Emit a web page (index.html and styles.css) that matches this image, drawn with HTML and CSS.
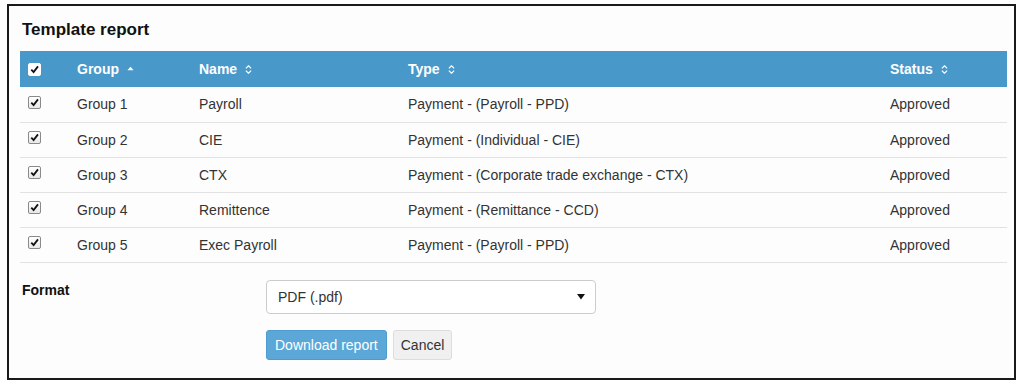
FILE: index.html
```html
<!DOCTYPE html>
<html>
   <head>
      <meta charset="UTF-8">
      <meta name="viewport" content="width=device-width, initial-scale=1.0"/>
      <title>Template report</title>
      <link rel="stylesheet" href="styles.css">
   </head>
   <body>
      <div class="frame">
         <h2 class="title">Template report</h2>

         <table class="report">
            <thead>
               <tr>
                  <th class="col-check"><span class="check check-head"><svg viewBox="0 0 12 12"><path d="M2.5 6.2 L5 8.8 L9.8 2.6" /></svg></span></th>
                  <th class="col-group">Group <svg class="sort" viewBox="0 0 8 10"><path class="up" d="M1.2 5.6 L4 2.6 L6.8 5.6 Z" /></svg></th>
                  <th class="col-name">Name <svg class="sort" viewBox="0 0 8 10"><path d="M1.6 4 L4 1.6 L6.4 4 M1.6 6 L4 8.4 L6.4 6" /></svg></th>
                  <th class="col-type">Type <svg class="sort" viewBox="0 0 8 10"><path d="M1.6 4 L4 1.6 L6.4 4 M1.6 6 L4 8.4 L6.4 6" /></svg></th>
                  <th class="col-status">Status <svg class="sort" viewBox="0 0 8 10"><path d="M1.6 4 L4 1.6 L6.4 4 M1.6 6 L4 8.4 L6.4 6" /></svg></th>
               </tr>
            </thead>
            <tbody>
               <tr>
                  <td><span class="check"><svg viewBox="0 0 12 12"><path d="M2.5 6.2 L5 8.8 L9.8 2.6" /></svg></span></td>
                  <td>Group 1</td>
                  <td>Payroll</td>
                  <td>Payment - (Payroll - PPD)</td>
                  <td>Approved</td>
               </tr>
               <tr>
                  <td><span class="check"><svg viewBox="0 0 12 12"><path d="M2.5 6.2 L5 8.8 L9.8 2.6" /></svg></span></td>
                  <td>Group 2</td>
                  <td>CIE</td>
                  <td>Payment - (Individual - CIE)</td>
                  <td>Approved</td>
               </tr>
               <tr>
                  <td><span class="check"><svg viewBox="0 0 12 12"><path d="M2.5 6.2 L5 8.8 L9.8 2.6" /></svg></span></td>
                  <td>Group 3</td>
                  <td>CTX</td>
                  <td>Payment - (Corporate trade exchange - CTX)</td>
                  <td>Approved</td>
               </tr>
               <tr>
                  <td><span class="check"><svg viewBox="0 0 12 12"><path d="M2.5 6.2 L5 8.8 L9.8 2.6" /></svg></span></td>
                  <td>Group 4</td>
                  <td>Remittence</td>
                  <td>Payment - (Remittance - CCD)</td>
                  <td>Approved</td>
               </tr>
               <tr>
                  <td><span class="check"><svg viewBox="0 0 12 12"><path d="M2.5 6.2 L5 8.8 L9.8 2.6" /></svg></span></td>
                  <td>Group 5</td>
                  <td>Exec Payroll</td>
                  <td>Payment - (Payroll - PPD)</td>
                  <td>Approved</td>
               </tr>
            </tbody>
         </table>

         <div class="form-row">
            <label class="form-label">Format</label>
            <div class="form-field">
               <div class="select">
                  <span>PDF (.pdf)</span>
                  <svg class="caret" viewBox="0 0 8 6"><path d="M0 0 H8 L4 5.5 Z" /></svg>
               </div>
               <div class="actions">
                  <button class="btn btn-primary">Download report</button>
                  <button class="btn btn-default">Cancel</button>
               </div>
            </div>
         </div>
      </div>
   </body>
</html>
```

FILE: styles.css
```css
*
{
   box-sizing: border-box;
}

body
{
   margin: 0;
   font-family: "Liberation Sans", Arial, sans-serif;
   font-size: 14px;
   color: #333333;
   background: #ffffff;
}

.frame
{
   width: 1009px;
   height: 376px;
   margin: 4px 0 0 7px;
   padding: 14px 6px 0 11px;
   border: 2px solid #1a1a1a;
   background: #fdfdfd;
}

.title
{
   margin: 0 0 11px 2px;
   font-size: 17px;
   line-height: 20px;
   font-weight: bold;
   color: #111111;
}

.report
{
   width: 987px;
   border-collapse: collapse;
   table-layout: fixed;
}

.report th
{
   height: 36px;
   padding: 0 8px;
   background: #4898c9;
   color: #ffffff;
   font-weight: bold;
   text-align: left;
   vertical-align: middle;
}

.report td
{
   height: 35px;
   padding: 0 8px;
   border-bottom: 1px solid #e2e2e2;
   vertical-align: middle;
   line-height: 20px;
}

.col-check { width: 49px; }
.col-group { width: 122px; }
.col-name { width: 209px; }
.col-type { width: 482px; }
.col-status { width: 125px; }

.sort
{
   width: 9px;
   height: 11px;
   margin-left: 3px;
   vertical-align: -1px;
}

.sort path
{
   fill: none;
   stroke: #ffffff;
   stroke-width: 1;
   stroke-linejoin: round;
}

.sort path.up
{
   fill: #ffffff;
   stroke: none;
}

.check
{
   display: inline-block;
   width: 13px;
   height: 13px;
   border: 1px solid #8a8a8a;
   border-radius: 2px;
   background: linear-gradient(#ffffff, #e8e8e8);
   vertical-align: middle;
   position: relative;
   top: -3px;
}

.check-head
{
   border-color: #ffffff;
   background: #ffffff;
   top: -1px;
}

.check svg
{
   display: block;
   width: 11px;
   height: 11px;
}

.check path
{
   fill: none;
   stroke: #111111;
   stroke-width: 2;
}

.form-row
{
   display: flex;
   margin-top: 17px;
}

.form-label
{
   width: 246px;
   padding-left: 2px;
   font-weight: bold;
   line-height: 20px;
   color: #111111;
}

.select
{
   display: flex;
   align-items: center;
   justify-content: space-between;
   width: 330px;
   height: 34px;
   padding: 0 10px 0 11px;
   border: 1px solid #cccccc;
   border-radius: 4px;
   background: #ffffff;
   color: #333333;
}

.caret
{
   width: 8px;
   height: 6px;
}

.caret path
{
   fill: #111111;
}

.actions
{
   display: flex;
   gap: 6px;
   margin-top: 16px;
}

.btn
{
   height: 30px;
   padding: 0 8px;
   border: 1px solid transparent;
   border-radius: 3px;
   font-family: inherit;
   font-size: 14px;
}

.btn-primary
{
   background: #5aa7d8;
   border-color: #4d9ccf;
   color: #ffffff;
}

.btn-default
{
   padding: 0 7px;
   background: #f0f0f0;
   border-color: #dddddd;
   color: #333333;
}
```
